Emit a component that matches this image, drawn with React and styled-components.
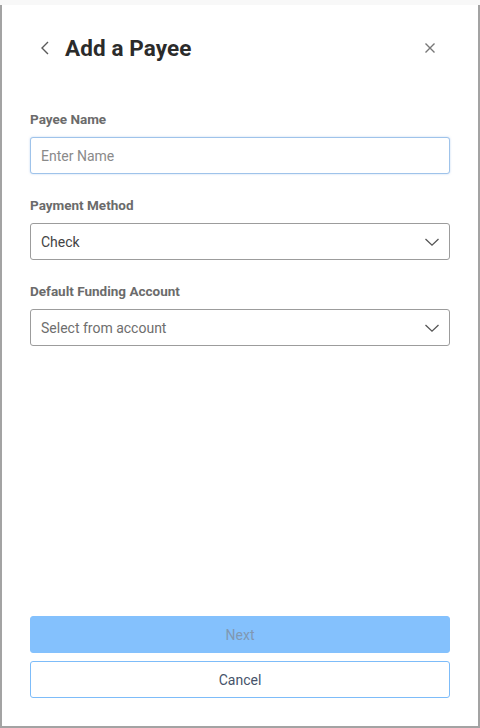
import React, { useState } from 'react'
import styled, { createGlobalStyle } from 'styled-components'

const GlobalStyle = createGlobalStyle`
    html, body {
        margin: 0;
        padding: 0;
        background: #f8f8f8;
        font-family: Roboto, "Liberation Sans", Arial, sans-serif;
    }
    * {
        box-sizing: border-box;
    }
`

const Page = styled.div`
    width: 480px;
    height: 728px;
    padding-top: 5px;
    background: #f8f8f8;
`

const Dialog = styled.div`
    width: 480px;
    height: 723px;
    background: #ffffff;
    border: 2px solid #a3a3a3;
    border-top: none;
    padding: 0 28px 28px 28px;
    display: flex;
    flex-direction: column;
`

const Header = styled.div`
    height: 30px;
    margin-top: 28px;
    margin-bottom: 48px;
    display: flex;
    flex-direction: row;
    align-items: center;
`

const IconButton = styled.button`
    border: none;
    background: none;
    padding: 0;
    width: 20px;
    height: 20px;
    display: flex;
    align-items: center;
    justify-content: center;
    cursor: pointer;
`

const BackWrap = styled.div`
    margin-left: 5px;
    margin-right: 10px;
`

const Title = styled.h1`
    margin: 0;
    font-size: 22.5px;
    font-weight: 700;
    color: #2b2b2b;
    flex: 1;
    letter-spacing: 0.1px;
`

const CloseWrap = styled.div`
    margin-right: 10px;
`

const Field = styled.div`
    display: flex;
    flex-direction: column;
    margin-bottom: 23px;
`

const Label = styled.label`
    font-size: 13.5px;
    font-weight: 700;
    line-height: 16px;
    color: #6b6b6b;
    margin-bottom: 10px;
`

const Input = styled.input`
    height: 37px;
    width: 100%;
    border: 1px solid ${props => props.$focused ? '#9fc3ea' : '#a0a0a0'};
    box-shadow: ${props => props.$focused ? '0 0 2px rgba(120, 170, 230, 0.5)' : 'none'};
    border-radius: 3px;
    padding: 0 10px;
    font-family: inherit;
    font-size: 14px;
    color: #333;
    outline: none;
    &::placeholder {
        color: #8a8a8a;
    }
`

const Select = styled.div`
    height: 37px;
    border: 1px solid #9c9c9c;
    border-radius: 3px;
    padding: 0 9px 0 10px;
    display: flex;
    flex-direction: row;
    align-items: center;
    justify-content: space-between;
    font-size: 14px;
    color: ${props => props.$placeholder ? '#6e6e6e' : '#444'};
    cursor: pointer;
`

const Spacer = styled.div`
    flex: 1;
`

const Button = styled.button`
    height: 37px;
    width: 100%;
    border-radius: 3px;
    font-family: inherit;
    font-size: 14px;
    border: 1px solid ${props => props.$primary ? '#84c1fd' : '#7dbcf9'};
    background-color: ${props => props.$primary ? '#84c1fd' : '#ffffff'};
    color: ${props => props.$primary ? '#8098b2' : '#46536a'};
    margin-top: ${props => props.$primary ? '0' : '8px'};
    cursor: pointer;
`

const ChevronDown = () => (
    <svg width="16" height="10" viewBox="0 0 16 10" fill="none">
        <path d="M1.5 2 L8 8.2 L14.5 2" stroke="#555" strokeWidth="1.3" />
    </svg>
)

function App() {
    const [name, setName] = useState('')

    return (
        <Page>
            <GlobalStyle />
            <Dialog>
                <Header>
                    <BackWrap>
                        <IconButton aria-label="Back">
                            <svg width="12" height="16" viewBox="0 0 12 16" fill="none">
                                <path d="M9 2 L3 8 L9 14" stroke="#5a5a5a" strokeWidth="1.4" />
                            </svg>
                        </IconButton>
                    </BackWrap>
                    <Title>Add a Payee</Title>
                    <CloseWrap>
                        <IconButton aria-label="Close">
                            <svg width="12" height="12" viewBox="0 0 12 12" fill="none">
                                <path d="M1.5 1.5 L10.5 10.5 M10.5 1.5 L1.5 10.5" stroke="#777" strokeWidth="1.4" />
                            </svg>
                        </IconButton>
                    </CloseWrap>
                </Header>

                <Field>
                    <Label>Payee Name</Label>
                    <Input
                        $focused
                        autoFocus
                        type='text'
                        placeholder='Enter Name'
                        value={name}
                        onChange={({ target: { value } }) => setName(value)}
                    />
                </Field>

                <Field>
                    <Label>Payment Method</Label>
                    <Select>
                        Check
                        <ChevronDown />
                    </Select>
                </Field>

                <Field>
                    <Label>Default Funding Account</Label>
                    <Select $placeholder>
                        Select from account
                        <ChevronDown />
                    </Select>
                </Field>

                <Spacer />

                <Button $primary disabled>Next</Button>
                <Button>Cancel</Button>
            </Dialog>
        </Page>
    )
}

export default App
